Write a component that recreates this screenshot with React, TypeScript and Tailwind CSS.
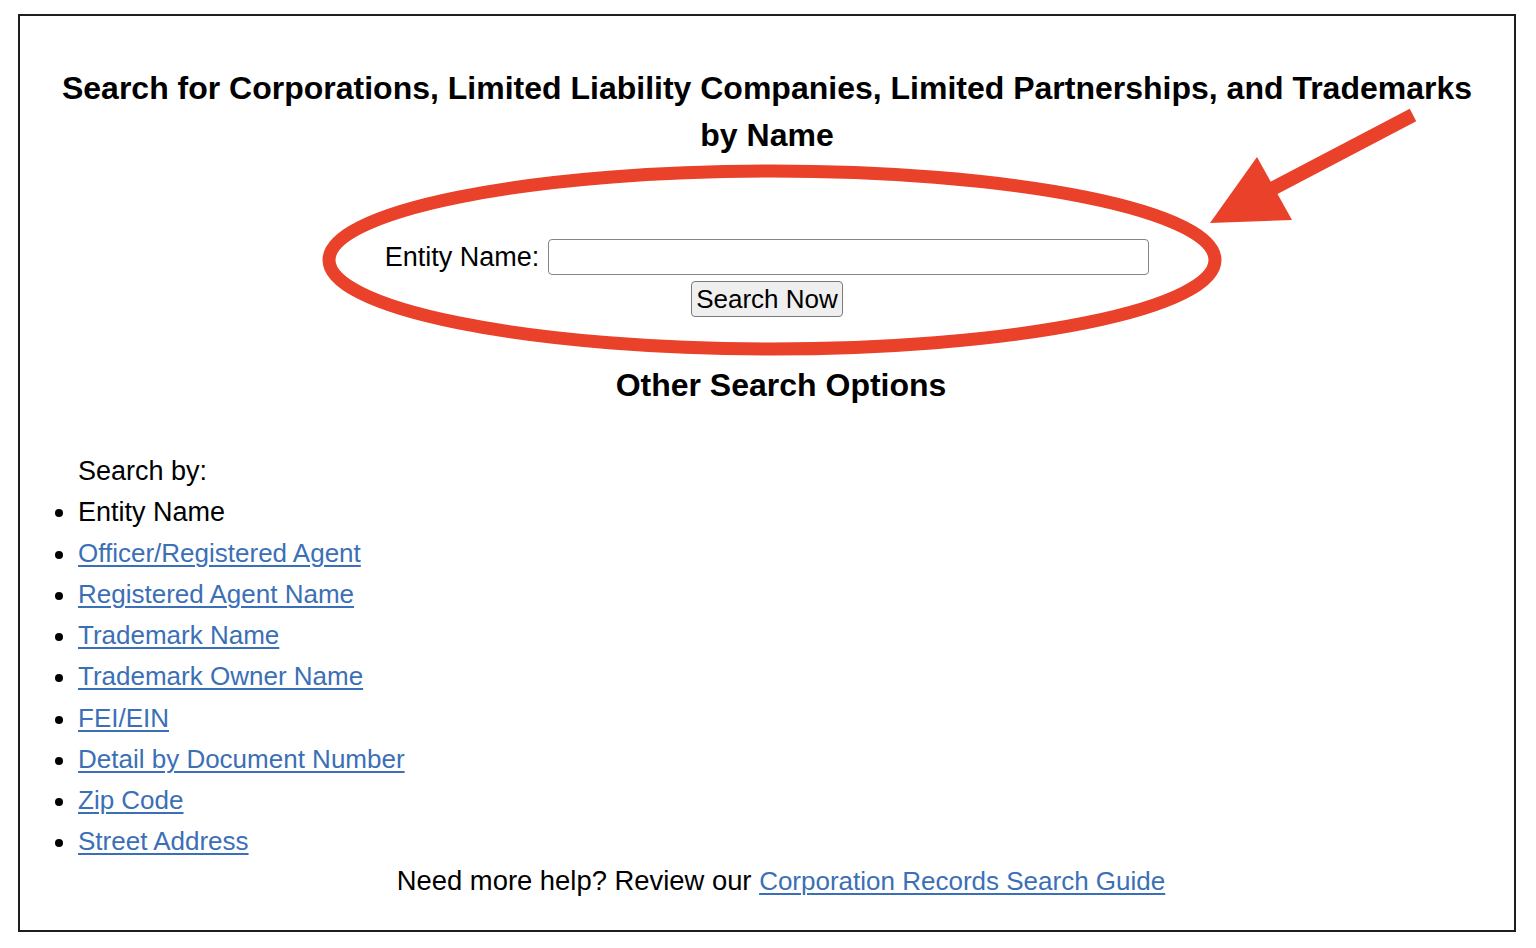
import React from "react";

const links = [
  "Officer/Registered Agent",
  "Registered Agent Name",
  "Trademark Name",
  "Trademark Owner Name",
  "FEI/EIN",
  "Detail by Document Number",
  "Zip Code",
  "Street Address",
];

export default function App() {
  return (
    <div
      className="relative w-[1536px] h-[948px] bg-white text-black overflow-hidden"
      style={{ fontFamily: '"Liberation Sans", Arial, Helvetica, sans-serif' }}
    >
      <div className="pt-[14px] pl-[18px]">
        <div className="w-[1498px] h-[918px] border-2 border-[#1e1e1e] flex flex-col">
          <h1 className="pt-[49px] text-center font-bold text-[32px] leading-[47px]">
            Search for Corporations, Limited Liability Companies, Limited Partnerships, and Trademarks
            <br />
            by Name
          </h1>
          <div className="mt-[80px] flex flex-col items-center">
            <div className="flex items-center">
              <label className="text-[27px] leading-[36px]">Entity Name:</label>
              <input
                type="text"
                className="ml-[9px] w-[601px] h-[36px] border-[1.5px] border-[#858585] rounded-[4px] bg-white outline-none px-2 text-[27px]"
              />
            </div>
            <button className="mt-[6px] h-[36px] px-[4px] bg-[#efefef] border-[1.5px] border-[#7a7a7a] rounded-[4px] text-[26px] leading-[32px] text-black">
              Search Now
            </button>
          </div>
          <div className="ml-[28px]">
            <h2 className="mt-[44px] text-center font-bold text-[32px] leading-[48px]">
              Other Search Options
            </h2>
            <div className="mt-[42px] text-[27px] leading-[41.25px]">
              <div className="pl-[30px]">Search by:</div>
              <ul className="list-disc pl-[30px]">
                <li>Entity Name</li>
                {links.map((l) => (
                  <li key={l} className="text-[27px]">
                    <a
                      href="#"
                      className="text-[26px] leading-[26px] align-[1px] text-[#3b6fb6] underline decoration-[2px] underline-offset-[3px]"
                    >
                      {l}
                    </a>
                  </li>
                ))}
              </ul>
              <p className="text-center mt-[-4px] text-[27.4px]">
                Need more help? Review our{" "}
                <a
                  href="#"
                  className="text-[26px] leading-[26px] text-[#3b6fb6] underline decoration-[2px] underline-offset-[3px]"
                >
                  Corporation Records Search Guide
                </a>
              </p>
            </div>
          </div>
        </div>
      </div>

      <svg
        className="absolute left-0 top-0 pointer-events-none"
        width="1536"
        height="948"
        viewBox="0 0 1536 948"
      >
        <ellipse
          cx="772"
          cy="260"
          rx="443"
          ry="89"
          fill="none"
          stroke="#e9412a"
          strokeWidth="13"
        />
        <line
          x1="1413"
          y1="115"
          x2="1268"
          y2="191"
          stroke="#e9412a"
          strokeWidth="14"
        />
        <polygon points="1210,223 1257,157 1292,220" fill="#e9412a" />
      </svg>
    </div>
  );
}
